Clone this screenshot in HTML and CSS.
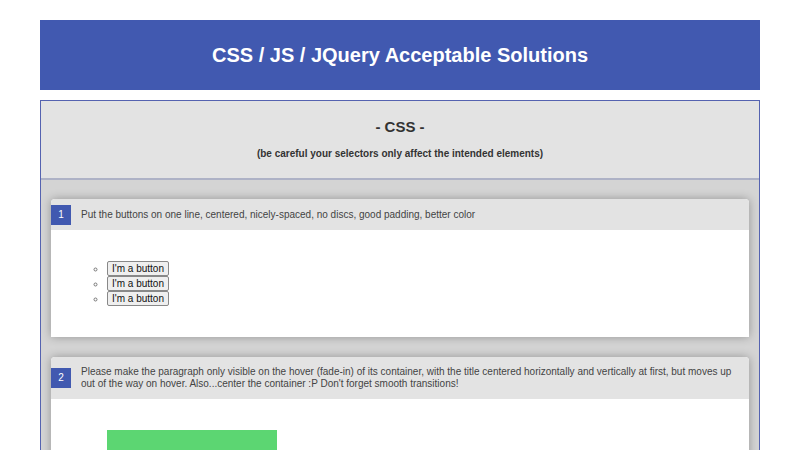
FILE: index.html
```html
<!DOCTYPE html>
<html>

<head>
    <link rel="stylesheet" href="styles.css">
</head>

<body>
    <header class="banner">
        <h1>CSS / JS / JQuery Acceptable Solutions</h1>
    </header>

    <div class="section">
        <div class="section-head">
            <h2>- CSS -</h2>
            <p>(be careful your selectors only affect the intended elements)</p>
        </div>
        <div class="section-body">

            <div class="task">
                <div class="task-head">
                    <span class="num">1</span>
                    <p>Put the buttons on one line, centered, nicely-spaced, no discs, good padding, better color</p>
                </div>
                <div class="task-body">
                    <ul class="buttons">
                        <li><button>I'm a button</button></li>
                        <li><button>I'm a button</button></li>
                        <li><button>I'm a button</button></li>
                    </ul>
                </div>
            </div>

            <div class="task">
                <div class="task-head">
                    <span class="num">2</span>
                    <p>Please make the paragraph only visible on the hover (fade-in) of its container, with the title centered horizontally and vertically at first, but moves up out of the way on hover. Also...center the container :P Don't forget smooth transitions!</p>
                </div>
                <div class="task-body">
                    <div class="fade-box"></div>
                </div>
            </div>

        </div>
    </div>
</body>

</html>
```

FILE: styles.css
```css
body {
    margin: 20px 40px;
    font-family: "Liberation Sans", Arial, sans-serif;
    background: #fff;
}

.banner {
    background-color: #4159b0;
    height: 70px;
    display: flex;
    align-items: center;
    justify-content: center;
}

.banner h1 {
    margin: 0;
    color: #fff;
    font-size: 20px;
    font-weight: bold;
}

.section {
    margin-top: 10px;
    border: 1px solid #5563b0;
}

.section-head {
    background-color: #e3e3e3;
    border-bottom: 2px solid #aeb2c6;
    text-align: center;
    padding: 17px 0 18px;
    color: #333;
}

.section-head h2 {
    margin: 0;
    font-size: 15px;
    line-height: 18px;
}

.section-head p {
    margin: 12px 0 0;
    font-size: 10px;
    font-weight: bold;
    line-height: 12px;
}

.section-body {
    background-color: #d4d4d4;
    padding: 19px 10px 20px;
}

.task {
    background: #fff;
    border-radius: 4px 4px 0 0;
    box-shadow: 0 0 10px rgba(0, 0, 0, 0.3);
    margin-bottom: 20px;
}

.task-head {
    display: flex;
    align-items: center;
    background-color: #e3e3e3;
    border-radius: 4px 4px 0 0;
    padding: 5.5px 10px 5.5px 0;
}

.num {
    flex: none;
    width: 20px;
    height: 20px;
    line-height: 20px;
    background-color: #4159b0;
    color: #fff;
    font-size: 10px;
    text-align: center;
}

.task-head p {
    margin: 0 0 0 10px;
    padding: 3.5px 0;
    font-size: 10px;
    line-height: 12px;
    color: #444;
}

.task-body {
    padding: 15px 16px;
}

.buttons {
    margin: 16px 0;
    padding-left: 40px;
    list-style: circle;
    font-size: 11px;
    line-height: 14px;
    color: #777;
}

.buttons li {
    height: 15px;
}

.buttons button {
    font-family: "Liberation Sans", Arial, sans-serif;
    font-size: 10px;
    line-height: 11px;
    color: #111;
    background: #efefef;
    border: 1px solid #888;
    border-radius: 2px;
    padding: 1px 4px;
    vertical-align: top;
}

.fade-box {
    margin: 16px 0 0 40px;
    width: 170px;
    height: 100px;
    background-color: #5cd672;
}
```
